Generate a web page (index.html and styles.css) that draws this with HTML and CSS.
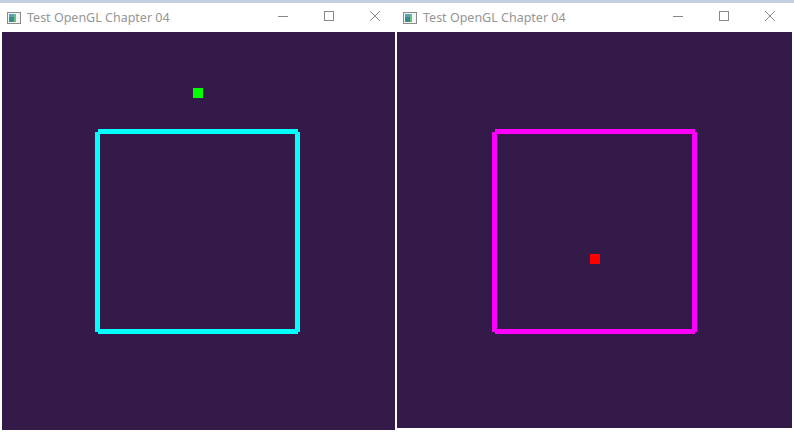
FILE: index.html
```html
<!DOCTYPE html>
<html>
<head>
<meta charset="utf-8">
<link rel="stylesheet" href="styles.css">
</head>
<body>
<div class="strip"></div>
<div class="desk">
  <div class="win win-left">
    <div class="titlebar">
      <svg class="appicon" width="14" height="12" viewBox="0 0 14 12"><rect x="0.5" y="0.5" width="13" height="11" fill="#f4f4f4" stroke="#8a8a8a"/><rect x="2" y="2" width="5" height="8" fill="#3d8a8a"/><rect x="2" y="2" width="5" height="3" fill="#5aa0c0"/><rect x="7" y="2" width="2" height="8" fill="#6bbf7a"/></svg>
      <span class="title">Test OpenGL Chapter 04</span>
      <div class="controls">
        <svg class="ctl" width="46" height="29" viewBox="0 0 46 29"><line x1="18" y1="13.5" x2="28" y2="13.5" stroke="#888" stroke-width="1"/></svg>
        <svg class="ctl" width="46" height="29" viewBox="0 0 46 29"><rect x="18.5" y="8.5" width="9" height="9" fill="none" stroke="#888" stroke-width="1"/></svg>
        <svg class="ctl" width="46" height="29" viewBox="0 0 46 29"><path d="M18 8 L28 18 M28 8 L18 18" stroke="#888" stroke-width="1"/></svg>
      </div>
    </div>
    <div class="gl gl-left">
      <svg width="393" height="398" viewBox="2 32 393 398">
        <rect x="98" y="129" width="200" height="5" fill="#00ffff"/>
        <rect x="98" y="329" width="200" height="5" fill="#00ffff"/>
        <rect x="95" y="132" width="5" height="200" fill="#00ffff"/>
        <rect x="295" y="132" width="5" height="200" fill="#00ffff"/>
        <rect x="193" y="88" width="10" height="10" fill="#00ff00"/>
      </svg>
    </div>
  </div>
  <div class="win win-right">
    <div class="titlebar">
      <svg class="appicon" width="14" height="12" viewBox="0 0 14 12"><rect x="0.5" y="0.5" width="13" height="11" fill="#f4f4f4" stroke="#8a8a8a"/><rect x="2" y="2" width="5" height="8" fill="#3d8a8a"/><rect x="2" y="2" width="5" height="3" fill="#5aa0c0"/><rect x="7" y="2" width="2" height="8" fill="#6bbf7a"/></svg>
      <span class="title">Test OpenGL Chapter 04</span>
      <div class="controls">
        <svg class="ctl" width="46" height="29" viewBox="0 0 46 29"><line x1="18" y1="13.5" x2="28" y2="13.5" stroke="#888" stroke-width="1"/></svg>
        <svg class="ctl" width="46" height="29" viewBox="0 0 46 29"><rect x="18.5" y="8.5" width="9" height="9" fill="none" stroke="#888" stroke-width="1"/></svg>
        <svg class="ctl" width="46" height="29" viewBox="0 0 46 29"><path d="M18 8 L28 18 M28 8 L18 18" stroke="#888" stroke-width="1"/></svg>
      </div>
    </div>
    <div class="gl gl-right">
      <svg width="395" height="396" viewBox="397 32 395 396">
        <rect x="495" y="129" width="200" height="5" fill="#ff00ff"/>
        <rect x="495" y="329" width="200" height="5" fill="#ff00ff"/>
        <rect x="492" y="132" width="5" height="200" fill="#ff00ff"/>
        <rect x="692" y="132" width="5" height="200" fill="#ff00ff"/>
        <rect x="590" y="254" width="10" height="10" fill="#ff0000"/>
      </svg>
    </div>
  </div>
</div>
</body>
</html>
```

FILE: styles.css
```css
html, body {
  margin: 0;
  padding: 0;
  background: #ffffff;
  width: 794px;
  height: 434px;
  overflow: hidden;
}
.strip {
  height: 3px;
  background: #c5cfe1;
}
.desk {
  display: flex;
  align-items: flex-start;
}
.win {
  display: flex;
  flex-direction: column;
  background: #ffffff;
}
.win-left {
  width: 393px;
  padding-left: 2px;
}
.win-right {
  width: 395px;
  padding-left: 2px;
  padding-right: 2px;
}
.titlebar {
  height: 29px;
  display: flex;
  align-items: center;
  position: relative;
}
.appicon {
  margin-left: 5px;
  margin-right: 6px;
  flex: none;
}
.win-right .appicon {
  margin-left: 6px;
}
.title {
  font-family: "Noto Sans", "DejaVu Sans", sans-serif;
  font-size: 12.5px;
  color: #969696;
  line-height: 29px;
  flex: 1;
}
.controls {
  display: flex;
  margin-right: -3px;
}
.win-right .controls {
  margin-right: -1px;
}
.ctl {
  display: block;
}
.gl {
  background: #331a48;
}
.gl svg {
  display: block;
}
.gl-left {
  height: 398px;
}
.gl-right {
  height: 396px;
}
```
